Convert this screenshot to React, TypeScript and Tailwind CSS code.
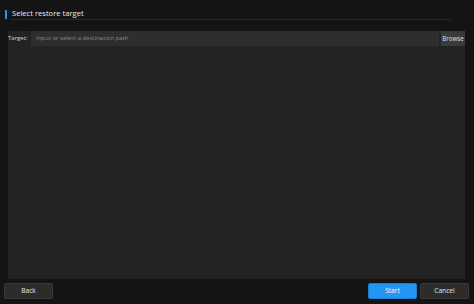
import React from "react";

const font = { fontFamily: '"Open Sans", "Noto Sans", sans-serif' };

export default function App() {
  return (
    <div
      className="w-[474px] h-[304px] bg-[#141414] flex flex-col overflow-hidden text-[#e6e6e6]"
      style={font}
    >
      {/* header */}
      <div className="pl-[5px] pt-[9px] flex items-center h-[19px]">
        <div className="w-[2px] h-[9px] bg-[#2196f3]" />
        <span className="ml-[5px] text-[7.6px] leading-none text-[#ececec]">Select restore target</span>
      </div>
      <div className="ml-[10px] w-[441px] h-px bg-[#2a2a2a]" />

      {/* content */}
      <div className="mt-[11px] ml-[8px] w-[457px] h-[248px] bg-[#232323] flex flex-col">
        <div className="flex h-[15px] items-stretch">
          <div className="w-[23px] flex items-center text-[6px] text-[#d8d8d8]">Target:</div>
          <div className="flex-1 bg-[#2e2e2e] flex items-center pl-[5px] text-[6px] text-[#8a8a8a]">
            Input or select a destination path
          </div>
          <button className="ml-[2px] w-[24px] bg-[#3a3a3a] text-[6.2px] text-[#e0e0e0] flex items-center justify-center">
            Browse
          </button>
        </div>
      </div>

      {/* footer */}
      <div className="mt-[4px] px-[4px] pr-[5px] flex items-center">
        <button className="w-[49px] h-[16px] rounded-[2px] bg-[#2c2c2c] border border-[#383838] text-[6.6px] text-[#e6e6e6]">
          Back
        </button>
        <div className="flex-1" />
        <button className="w-[49px] h-[16px] rounded-[2px] bg-[#2196f3] border border-[#1a7fd0] text-[6.6px] text-white">
          Start
        </button>
        <button className="ml-[3px] w-[49px] h-[16px] rounded-[2px] bg-[#2c2c2c] border border-[#383838] text-[6.6px] text-[#e6e6e6]">
          Cancel
        </button>
      </div>
    </div>
  );
}
